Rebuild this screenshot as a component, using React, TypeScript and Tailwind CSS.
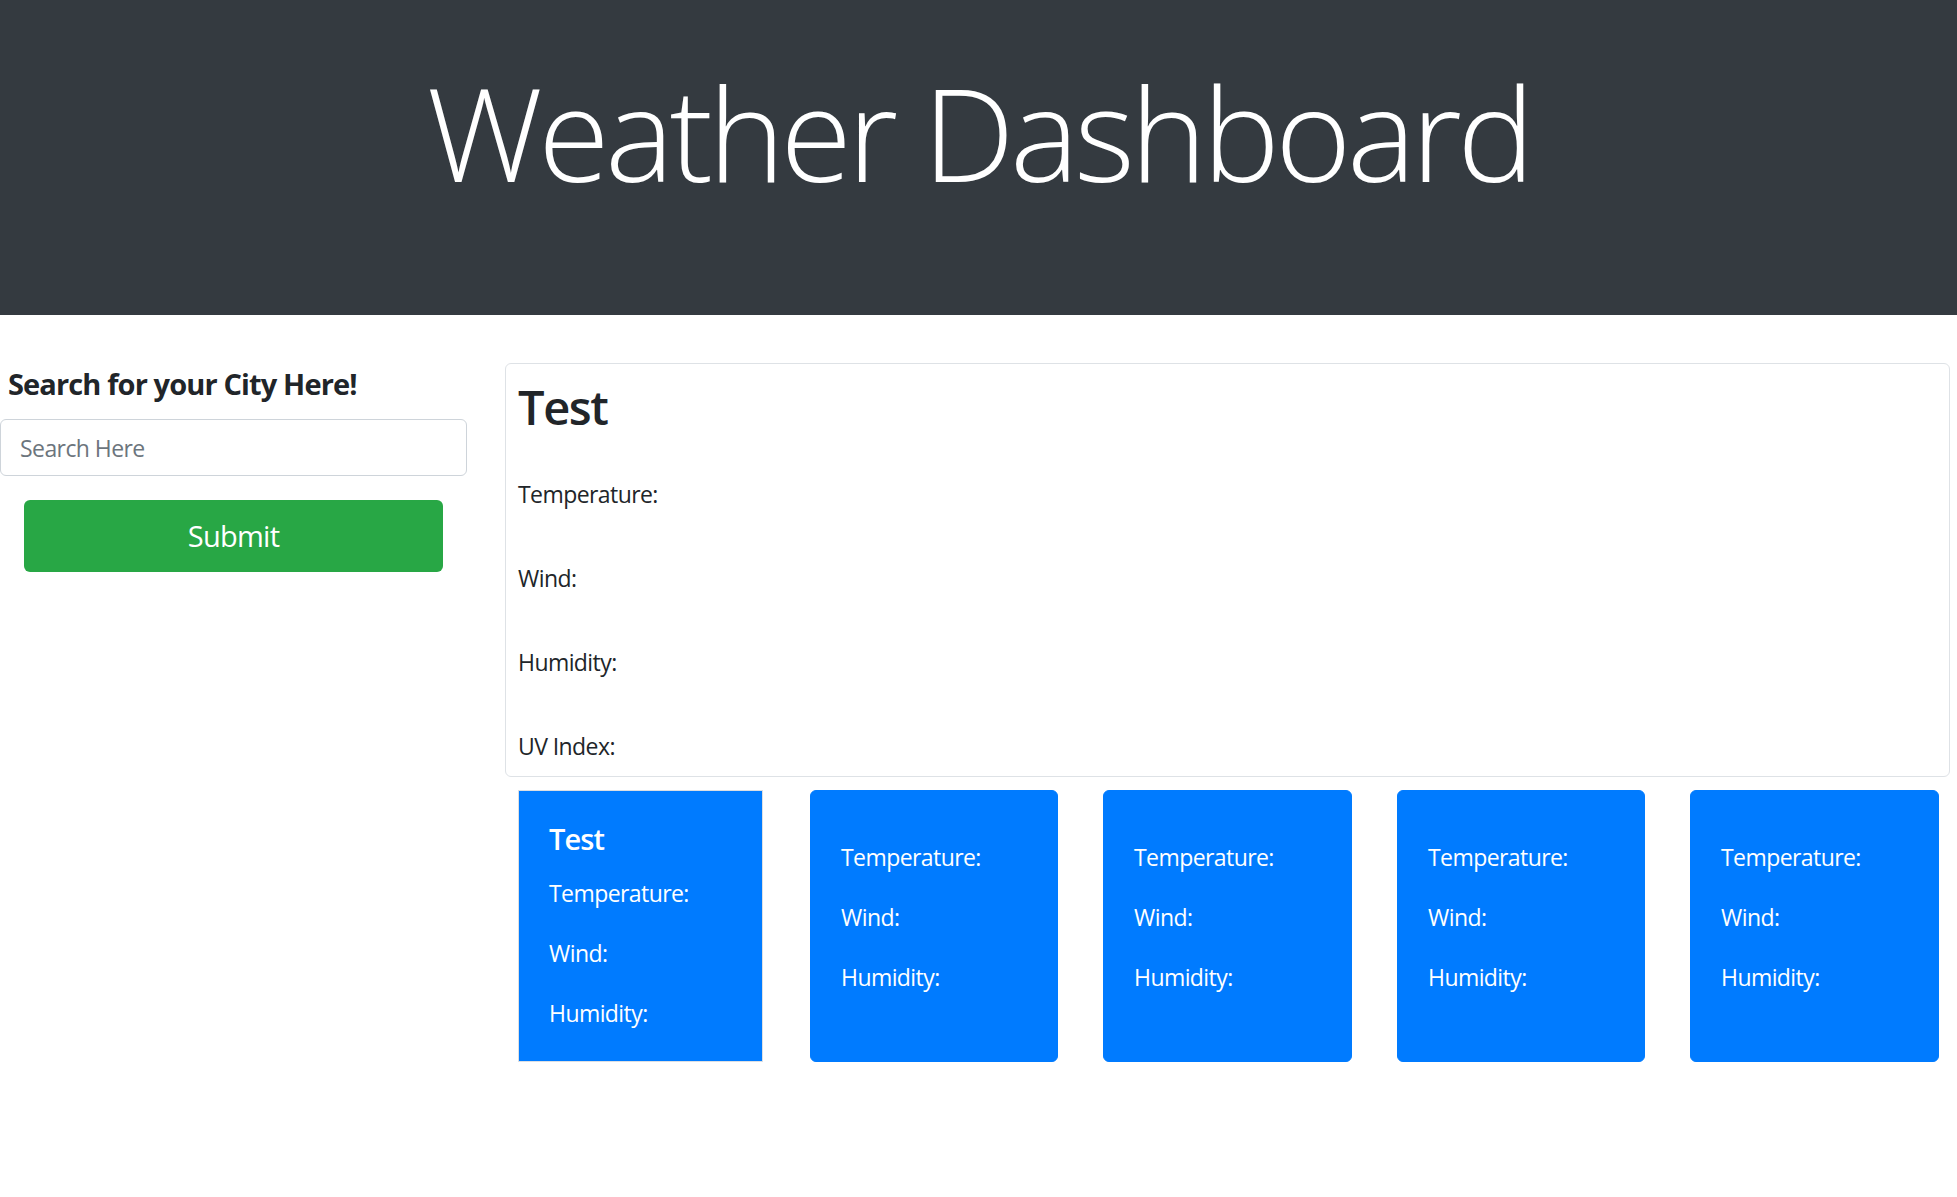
import { useState } from "react";

const FONT = "font-['Open_Sans','Noto_Sans',sans-serif]";
const LINE = "text-[23px] leading-[36px] tracking-[-0.025em]";

const FORECAST = [
  { title: "Test", first: true, className: "ml-[13px] w-[245px]" },
  { title: "", first: false, className: "ml-[47px] w-[248px]" },
  { title: "", first: false, className: "ml-[45px] w-[249px]" },
  { title: "", first: false, className: "ml-[45px] w-[248px]" },
  { title: "", first: false, className: "ml-[45px] w-[249px]" },
];

const ForecastCard = ({
  title,
  first,
  className,
}: {
  title: string;
  first: boolean;
  className: string;
}) => {
  return (
    <div
      className={`${className} bg-[#007bff] text-white p-[30px] border ${
        first ? "border-[#dcdfe3]" : "border-[#007bff] rounded-[6px]"
      }`}
    >
      <h5 className="text-[29px] leading-[36px] font-semibold tracking-[-0.03em] mb-[18px] h-[36px] empty:h-0">
        {title}
      </h5>
      <p className={`${LINE} mb-[24px]`}>Temperature:</p>
      <p className={`${LINE} mb-[24px]`}>Wind:</p>
      <p className={LINE}>Humidity:</p>
    </div>
  );
};

const App = () => {
  const [city, setCity] = useState("");

  return (
    <div className={`${FONT} min-h-screen bg-white text-[#212529]`}>
      <header className="h-[315px] bg-[#343a40] pt-[53px]">
        <h1 className="text-center text-white text-[130px] leading-[158px] font-light tracking-[-0.035em]">
          Weather Dashboard
        </h1>
      </header>

      <main className="flex pt-[48px]">
        <aside className="w-[467px] shrink-0">
          <h5 className="mt-[3px] ml-[8px] text-[29px] leading-[36px] font-bold tracking-[-0.03em]">
            Search for your City Here!
          </h5>
          <input
            className="mt-[17px] block w-full h-[57px] px-[19px] text-[23px] tracking-[-0.025em] border border-[#ced4da] rounded-[6px] placeholder:text-[#6c757d] outline-none"
            placeholder="Search Here"
            value={city}
            onChange={(e) => setCity(e.target.value)}
          />
          <button
            className="mt-[24px] ml-[24px] w-[419px] h-[72px] bg-[#28a745] text-white text-[29px] tracking-[-0.025em] rounded-[6px]"
            type="button"
          >
            Submit
          </button>
        </aside>

        <section className="ml-[38px] w-[1445px] shrink-0">
          <div className="border border-[#dee2e6] rounded-[6px] px-[12px] pt-[14px] pb-[12px]">
            <h2 className="text-[47px] leading-[58px] font-semibold tracking-[-0.03em] mb-[40px]">
              Test
            </h2>
            <p className={`${LINE} mb-[48px]`}>Temperature:</p>
            <p className={`${LINE} mb-[48px]`}>Wind:</p>
            <p className={`${LINE} mb-[48px]`}>Humidity:</p>
            <p className={LINE}>UV Index:</p>
          </div>

          <div className="flex mt-[13px]">
            {FORECAST.map((card, i) => (
              <ForecastCard key={i} {...card} />
            ))}
          </div>
        </section>
      </main>
    </div>
  );
};

export default App;
